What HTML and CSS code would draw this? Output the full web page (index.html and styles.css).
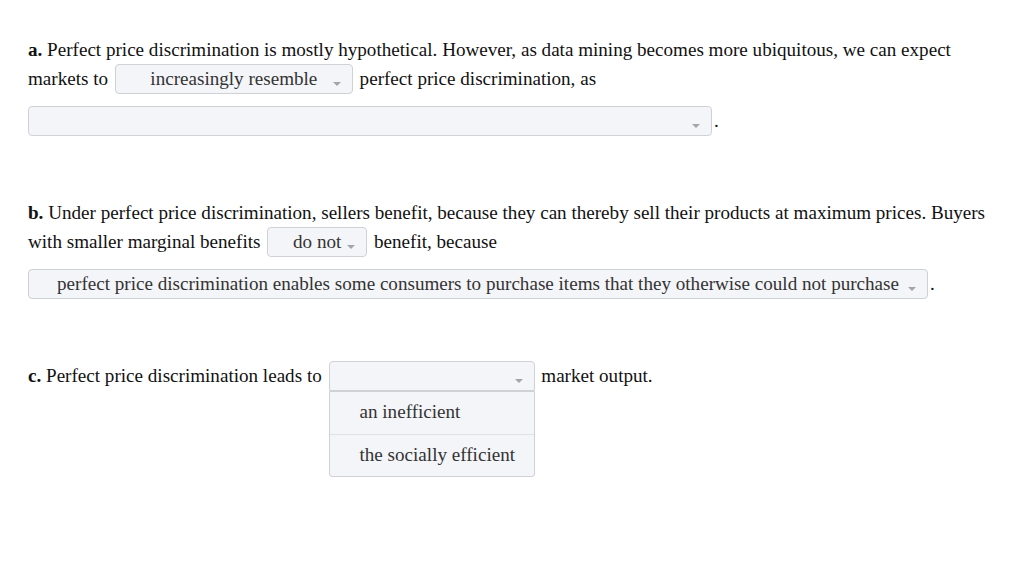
FILE: index.html
```html
<!DOCTYPE html>
<html>
<head>
<meta charset="utf-8">
<link rel="stylesheet" href="styles.css">
</head>
<body>
<div class="page">
  <p class="part"><b>a.</b> Perfect price discrimination is mostly hypothetical. However, as data mining becomes more ubiquitous, we can expect markets to <span class="sel w-a1">increasingly resemble<i class="caret"></i></span> perfect price discrimination, as <span class="sel w-a2 line-start">&nbsp;<i class="caret"></i></span>.</p>
  <p class="part"><b>b.</b> Under perfect price discrimination, sellers benefit, because they can thereby sell their products at maximum prices. Buyers with smaller marginal benefits <span class="sel w-b1">do not<i class="caret"></i></span> benefit, because <span class="sel w-b2 line-start">perfect price discrimination enables some consumers to purchase items that they otherwise could not purchase<i class="caret"></i></span>.</p>
  <p class="part"><b>c.</b> Perfect price discrimination leads to <span class="sel w-c1 open">&nbsp;<i class="caret"></i><span class="menu"><span class="opt">an inefficient</span><span class="opt">the socially efficient</span></span></span> market output.</p>
</div>
</body>
</html>
```
FILE: styles.css
```css
html, body {
  margin: 0;
  padding: 0;
  background: #ffffff;
}
.page {
  box-sizing: border-box;
  min-height: 566px;
  padding: 35px 28px 0 28px;
  font-family: "Liberation Serif", "Times New Roman", serif;
  font-size: 19.1px;
  color: #111111;
}
.part {
  margin: 0 0 50px 0;
  line-height: 29px;
}
.part b {
  font-weight: bold;
}
.sel {
  position: relative;
  display: inline-block;
  box-sizing: border-box;
  height: 30px;
  line-height: 28px;
  border: 1px solid #cfd1d6;
  border-radius: 4px;
  background: #f4f5f8;
  color: #333333;
  text-align: center;
  margin: 0 2px 12px 2px;
  vertical-align: baseline;
  white-space: nowrap;
}
.line-start {
  margin-left: 0;
}
.w-a1 { width: 238px; }
.w-a2 { width: 684px; }
.w-b1 { width: 100px; }
.w-b2 { width: 900px; }
.w-c1 { width: 206px; }
.caret {
  position: absolute;
  right: 11px;
  top: 17px;
  width: 0;
  height: 0;
  border-left: 4px solid transparent;
  border-right: 4px solid transparent;
  border-top: 4px solid #a3a5aa;
}
.open {
  border-radius: 4px 4px 0 0;
}
.menu {
  position: absolute;
  left: -1px;
  right: -1px;
  top: 29px;
  display: flex;
  flex-direction: column;
  border: 1px solid #cfd1d6;
  border-radius: 0 0 3px 3px;
  background: #f4f5f8;
  text-align: left;
  z-index: 2;
}
.opt {
  display: block;
  box-sizing: border-box;
  height: 42px;
  line-height: 40px;
  padding: 0 0 0 30px;
  color: #333333;
  border-top: 1px solid #e0e1e5;
}
.opt:first-child {
  border-top: none;
}
```
